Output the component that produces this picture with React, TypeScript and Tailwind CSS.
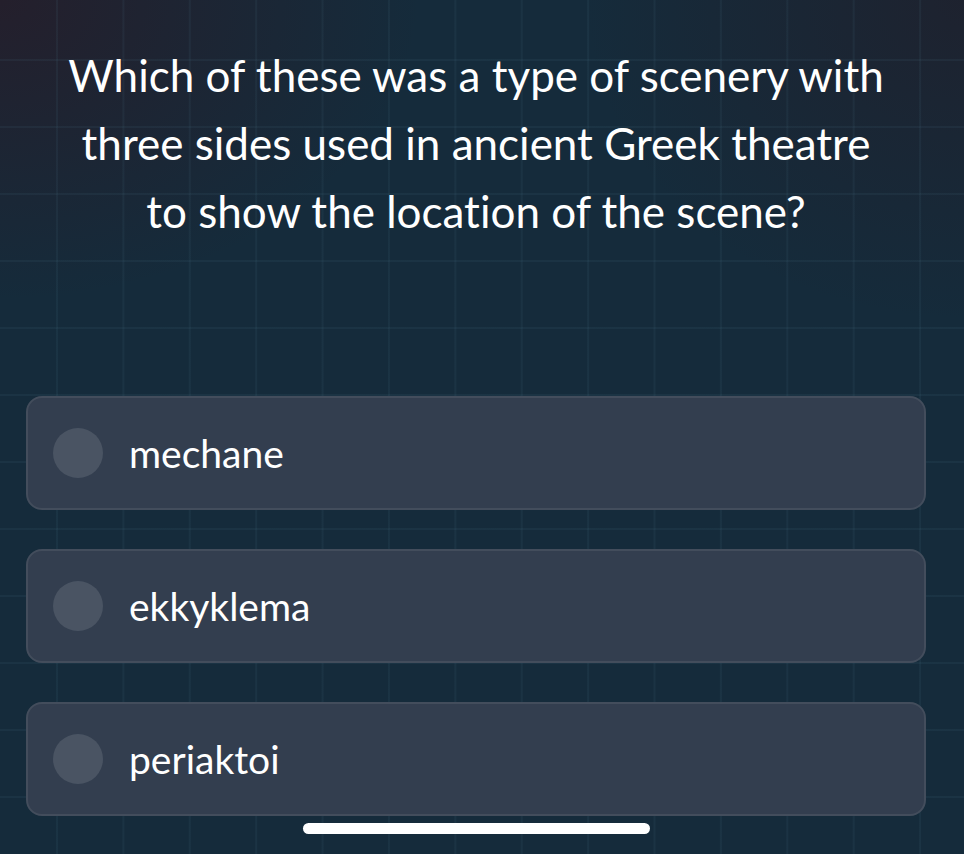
import React from "react";

const options = ["mechane", "ekkyklema", "periaktoi"];

function OptionCard({ label }: { label: string }) {
  return (
    <div className="flex h-[114px] w-[900px] items-center rounded-[16px] border-2 border-[#434d5c] bg-[#333e4f]">
      <div className="ml-[25px] h-[50px] w-[50px] shrink-0 rounded-full bg-[#4a5463]" />
      <span className="ml-[26px] text-[39px] leading-none text-white [font-variant-ligatures:none]">{label}</span>
    </div>
  );
}

export default function App() {
  return (
    <div className="relative h-[854px] w-[964px] overflow-hidden bg-[#152b3b] font-['Lato','Liberation_Sans',sans-serif]">
      {/* soft vignette in the top corners */}
      <div className="pointer-events-none absolute inset-0 bg-[radial-gradient(ellipse_420px_300px_at_0%_0%,rgba(40,28,40,0.8),transparent),radial-gradient(ellipse_380px_320px_at_100%_0%,rgba(32,32,44,0.8),transparent)]" />
      {/* faint blueprint grid */}
      <div className="pointer-events-none absolute inset-0 bg-[linear-gradient(to_right,rgba(70,110,130,0.12)_2px,transparent_2px),linear-gradient(to_bottom,rgba(70,110,130,0.12)_2px,transparent_2px)] bg-[size:66.4px_67px] bg-[position:56px_59px]" />

      <div className="relative flex flex-col pl-[26px]">
        <h1 className="mt-[41px] w-[900px] text-center text-[44px] font-normal leading-[68px] text-white [font-variant-ligatures:none]">
          Which of these was a type of scenery with
          <br />
          three sides used in ancient Greek theatre
          <br />
          to show the location of the scene?
        </h1>

        <div className="mt-[151px] flex flex-col gap-[39px]">
          {options.map((o) => (
            <OptionCard key={o} label={o} />
          ))}
        </div>

        <div className="mt-[7px] flex w-[900px] justify-center">
          <div className="h-[11px] w-[347px] rounded-full bg-white" />
        </div>
      </div>
    </div>
  );
}
